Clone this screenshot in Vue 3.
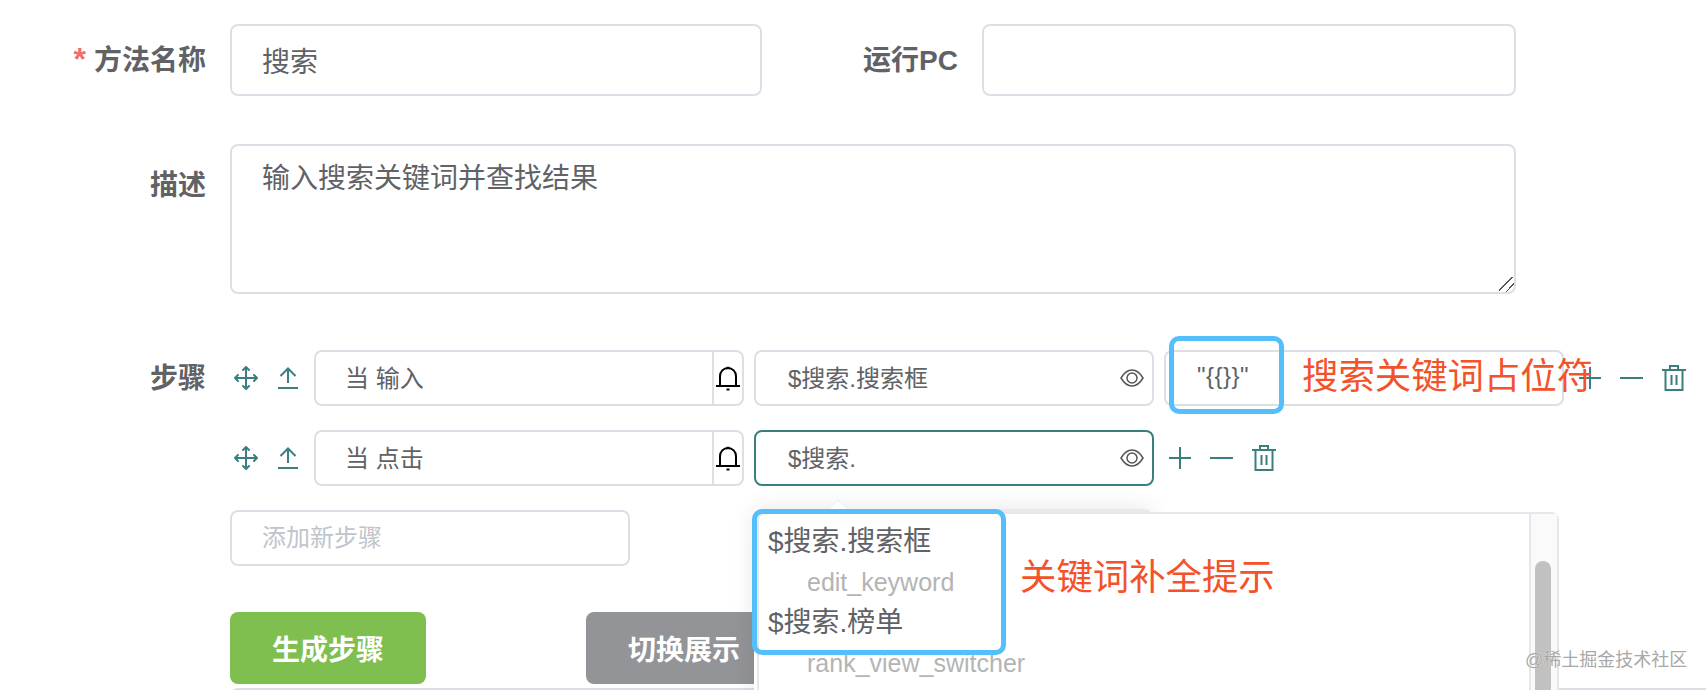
<script setup>
const steps = [
  { id: 1, verb: '当 输入', target: '$搜索.搜索框', value: '"{{}}"', focus: false },
  { id: 2, verb: '当 点击', target: '$搜索.', value: null, focus: true }
]
const options = [
  { name: '$搜索.搜索框', key: 'edit_keyword' },
  { name: '$搜索.榜单', key: 'rank_view_switcher' }
]
</script>

<template>
  <div class="page">
    <form class="form" @submit.prevent>
      <div class="row row-top">
        <label class="label"><span class="req">*</span>方法名称</label>
        <input class="input name" value="搜索" />
        <label class="label pc-label">运行PC</label>
        <input class="input pc" />
      </div>

      <div class="row row-desc">
        <label class="label desc-label">描述</label>
        <textarea class="textarea">输入搜索关键词并查找结果</textarea>
      </div>

      <div class="row row-steps">
        <label class="label step-label">步骤</label>
        <div class="steps">
          <div v-for="s in steps" :key="s.id" class="step">
            <div class="tools">
              <svg class="ico move" viewBox="0 0 24 24" fill="none" stroke="#3a7f7e" stroke-width="2" stroke-linecap="round" stroke-linejoin="round">
                <path d="M12 1v22M1 12h22M9 4l3-3 3 3M9 20l3 3 3-3M4 9l-3 3 3 3M20 9l3 3-3 3" />
              </svg>
              <svg class="ico upload" viewBox="0 0 20 22" fill="none" stroke="#3a7f7e" stroke-width="2">
                <path d="M10 16V1.500M2.500 9l7.500-7.500 7.500 7.500M0 21h20" />
              </svg>
            </div>
            <div class="field verb">
              <input class="inner" readonly :value="s.verb" />
              <span class="bell-box">
                <svg class="ico bell" viewBox="0 0 24 26" fill="none" stroke="#000" stroke-width="2">
                  <path d="M4 20v-9a8 8 0 0 1 16 0v9M0 21h24" />
                  <path d="M10.500 3h3" stroke-width="2.400" />
                  <path d="M10.500 24.500h3" />
                </svg>
              </span>
            </div>
            <div class="field target" :class="{ focused: s.focus }">
              <input class="inner" readonly :value="s.target" />
              <svg class="ico eye" viewBox="0 0 24 18" fill="none" stroke="#555" stroke-width="1.500">
                <path d="M1 9c3-5 7-8 11-8s8 3 11 8c-3 5-7 8-11 8S4 14 1 9z" />
                <circle cx="12" cy="9" r="5" />
              </svg>
            </div>
            <div v-if="s.value" class="field val">
              <input class="inner" readonly :value="s.value" />
            </div>
            <div class="actions">
              <svg class="ico plus" viewBox="0 0 22 22" fill="none" stroke="#3a7f7e" stroke-width="2"><path d="M11 0v22M0 11h22" /></svg>
              <svg class="ico minus" viewBox="0 0 23 22" fill="none" stroke="#3a7f7e" stroke-width="2"><path d="M0 11h23" /></svg>
              <svg class="ico trash" viewBox="0 0 24 26" fill="none" stroke="#3a7f7e" stroke-width="2">
                <path d="M0 5h24M8 5V1h8v4M3.500 5v20h17V5M9.500 10v10M14.500 10v10" />
              </svg>
            </div>
          </div>
          <input class="input add" placeholder="添加新步骤" />
        </div>
      </div>

      <div class="buttons">
        <button class="btn green" type="button">生成步骤</button>
        <button class="btn gray" type="button">切换展示</button>
      </div>
    </form>
    <div class="below"></div>

    <div class="popper">
      <span class="arrow"></span>
      <div class="list">
        <ul class="items">
          <li v-for="o in options" :key="o.key">
            <div class="opt-name">{{ o.name }}</div>
            <div class="opt-key">{{ o.key }}</div>
          </li>
        </ul>
        <div class="track"><div class="thumb"></div></div>
      </div>
    </div>

    <div class="mark mark-value"></div>
    <div class="mark mark-list"></div>
    <div class="note note-value">搜索关键词占位符</div>
    <div class="note note-list">关键词补全提示</div>
    <div class="watermark">@稀土掘金技术社区</div>
  </div>
</template>

<style scoped>
.page {
  position: relative;
  width: 1706px;
  height: 690px;
  overflow: hidden;
  background: #fff;
  color: #606266;
  font-family: "Liberation Sans", "Noto Sans CJK SC", sans-serif;
}
.form {
  padding: 24px 0 0;
}
.row {
  display: flex;
}
.row-top {
  margin-bottom: 48px;
  align-items: center;
}
.row-desc {
  margin-bottom: 56px;
}
.label {
  box-sizing: border-box;
  width: 206px;
  flex: none;
  padding-top: 2px;
  text-align: right;
  font-size: 28px;
  font-weight: 700;
  line-height: 70px;
  color: #606266;
}
.req {
  color: #f56c6c;
  margin-right: 8px;
  font-size: 32px;
  line-height: 1;
}
.input,
.textarea {
  box-sizing: border-box;
  border: 2px solid #dcdfe6;
  border-radius: 8px;
  background: #fff;
  color: #606266;
  font-family: inherit;
  outline: none;
}
.input {
  display: block;
}
.name {
  width: 532px;
  height: 72px;
  margin-left: 24px;
  padding: 0 30px;
  font-size: 28px;
}
.pc-label {
  width: 196px;
}
.pc {
  width: 534px;
  height: 72px;
  margin-left: 24px;
  font-size: 28px;
}
.desc-label {
  padding-top: 7px;
}
.textarea {
  display: block;
  width: 1286px;
  height: 150px;
  margin-left: 24px;
  padding: 13px 30px 9px;
  font-size: 28px;
  line-height: 40px;
  resize: both;
}
.textarea::-webkit-resizer {
  background: linear-gradient(
    135deg,
    transparent 0 42%,
    #555 42% 48%,
    transparent 48% 70%,
    #555 70% 76%,
    transparent 76%
  );
}
.step-label {
  padding-top: 2px;
  line-height: 54px;
}
.steps {
  display: flex;
  flex-direction: column;
  gap: 24px;
  margin-left: 24px;
  align-items: flex-start;
}
.step {
  display: flex;
  align-items: center;
  height: 56px;
  white-space: nowrap;
}
.tools {
  display: flex;
  align-items: center;
  width: 84px;
  padding-left: 4px;
  box-sizing: border-box;
  gap: 20px;
}
.ico {
  display: block;
  flex: none;
}
.move {
  width: 24px;
  height: 24px;
}
.upload {
  width: 20px;
  height: 22px;
}
.field {
  position: relative;
  box-sizing: border-box;
  height: 56px;
  display: flex;
  align-items: center;
  border: 2px solid #dcdfe6;
  border-radius: 8px;
  background: #fff;
}
.inner {
  box-sizing: border-box;
  flex: 1;
  min-width: 0;
  height: 100%;
  border: 0;
  outline: none;
  background: transparent;
  padding: 0 0 4px 32px;
  font-family: inherit;
  font-size: 24px;
  color: #606266;
}
.verb {
  width: 430px;
}
.verb .inner {
  padding-left: 29px;
}
.bell-box {
  box-sizing: border-box;
  width: 30px;
  height: 100%;
  display: flex;
  align-items: center;
  justify-content: center;
  border-left: 2px solid #dcdfe6;
}
.bell {
  width: 24px;
  height: 26px;
}
.target {
  width: 400px;
  margin-left: 10px;
  padding-right: 8px;
}
.focused {
  border-color: #3a7f7e;
}
.eye {
  width: 24px;
  height: 18px;
}
.val {
  width: 400px;
  margin-left: 10px;
}
.val .inner {
  padding-left: 31px;
  letter-spacing: 0.5px;
}
.actions {
  display: flex;
  align-items: center;
  gap: 19px;
  margin-left: 15px;
}
.plus {
  width: 22px;
  height: 22px;
}
.minus {
  width: 23px;
  height: 22px;
}
.trash {
  width: 24px;
  height: 26px;
}
.add {
  width: 400px;
  height: 56px;
  padding: 0 30px;
  font-size: 24px;
}
.add::placeholder {
  color: #c0c4cc;
}
.buttons {
  display: flex;
  gap: 160px;
  margin: 46px 0 0 230px;
}
.btn {
  width: 196px;
  height: 72px;
  border: 0;
  border-radius: 8px;
  color: #fff;
  font-family: inherit;
  font-size: 28px;
  font-weight: 700;
  padding: 0;
}
.green {
  background: #7fbf4f;
}
.gray {
  background: #939498;
}
.below {
  margin: 4px 0 0 230px;
  height: 12px;
  border-top: 2px solid #dcdfe6;
  border-top-left-radius: 8px;
}

.popper {
  position: absolute;
  left: 754px;
  top: 509px;
  width: 398px;
  height: 300px;
  border-radius: 8px;
  border-top: 4px solid #e8e8ee;
  box-sizing: border-box;
  background: #fff;
  box-shadow: 0 0 24px rgba(0, 0, 0, 0.1);
}
.arrow {
  position: absolute;
  left: 77px;
  top: -11px;
  width: 13px;
  height: 13px;
  background: #fff;
  border-left: 1px solid #ebeef5;
  border-top: 1px solid #ebeef5;
  transform: rotate(45deg);
}
.list {
  position: absolute;
  left: 3px;
  top: -1px;
  box-sizing: border-box;
  width: 802px;
  height: 300px;
  display: flex;
  background: #fff;
  border: 2px solid #e6e6ec;
  border-radius: 8px 8px 0 0;
}
.items {
  flex: 1;
  margin: 0;
  padding: 8px 0 0 9px;
  list-style: none;
}
.opt-name {
  font-size: 28px;
  line-height: 40px;
  color: #606266;
}
.opt-key {
  padding-left: 39px;
  font-size: 25px;
  line-height: 41px;
  color: #b4b4b4;
}
.track {
  box-sizing: border-box;
  width: 28px;
  padding: 47px 6px 0 4px;
  background: #fafafa;
  border-left: 2px solid #e6e6ec;
}
.thumb {
  width: 16px;
  height: 300px;
  border-radius: 8px;
  background: #c1c1c1;
}

.mark {
  position: absolute;
  box-sizing: border-box;
  border: 5px solid #54c0fb;
  border-radius: 10px;
}
.mark-value {
  left: 1169px;
  top: 336px;
  width: 115px;
  height: 78px;
}
.mark-list {
  left: 752px;
  top: 509px;
  width: 254px;
  height: 146px;
}
.note {
  position: absolute;
  font-size: 36.400px;
  line-height: 44px;
  color: #f4522a;
  white-space: nowrap;
}
.note-value {
  left: 1302px;
  top: 355px;
}
.note-list {
  left: 1020px;
  top: 556px;
}
.watermark {
  position: absolute;
  left: 1525px;
  top: 649px;
  font-size: 18px;
  line-height: 22px;
  color: #a8a8a8;
  white-space: nowrap;
  text-shadow: 0 0 1px #fff;
}
</style>
